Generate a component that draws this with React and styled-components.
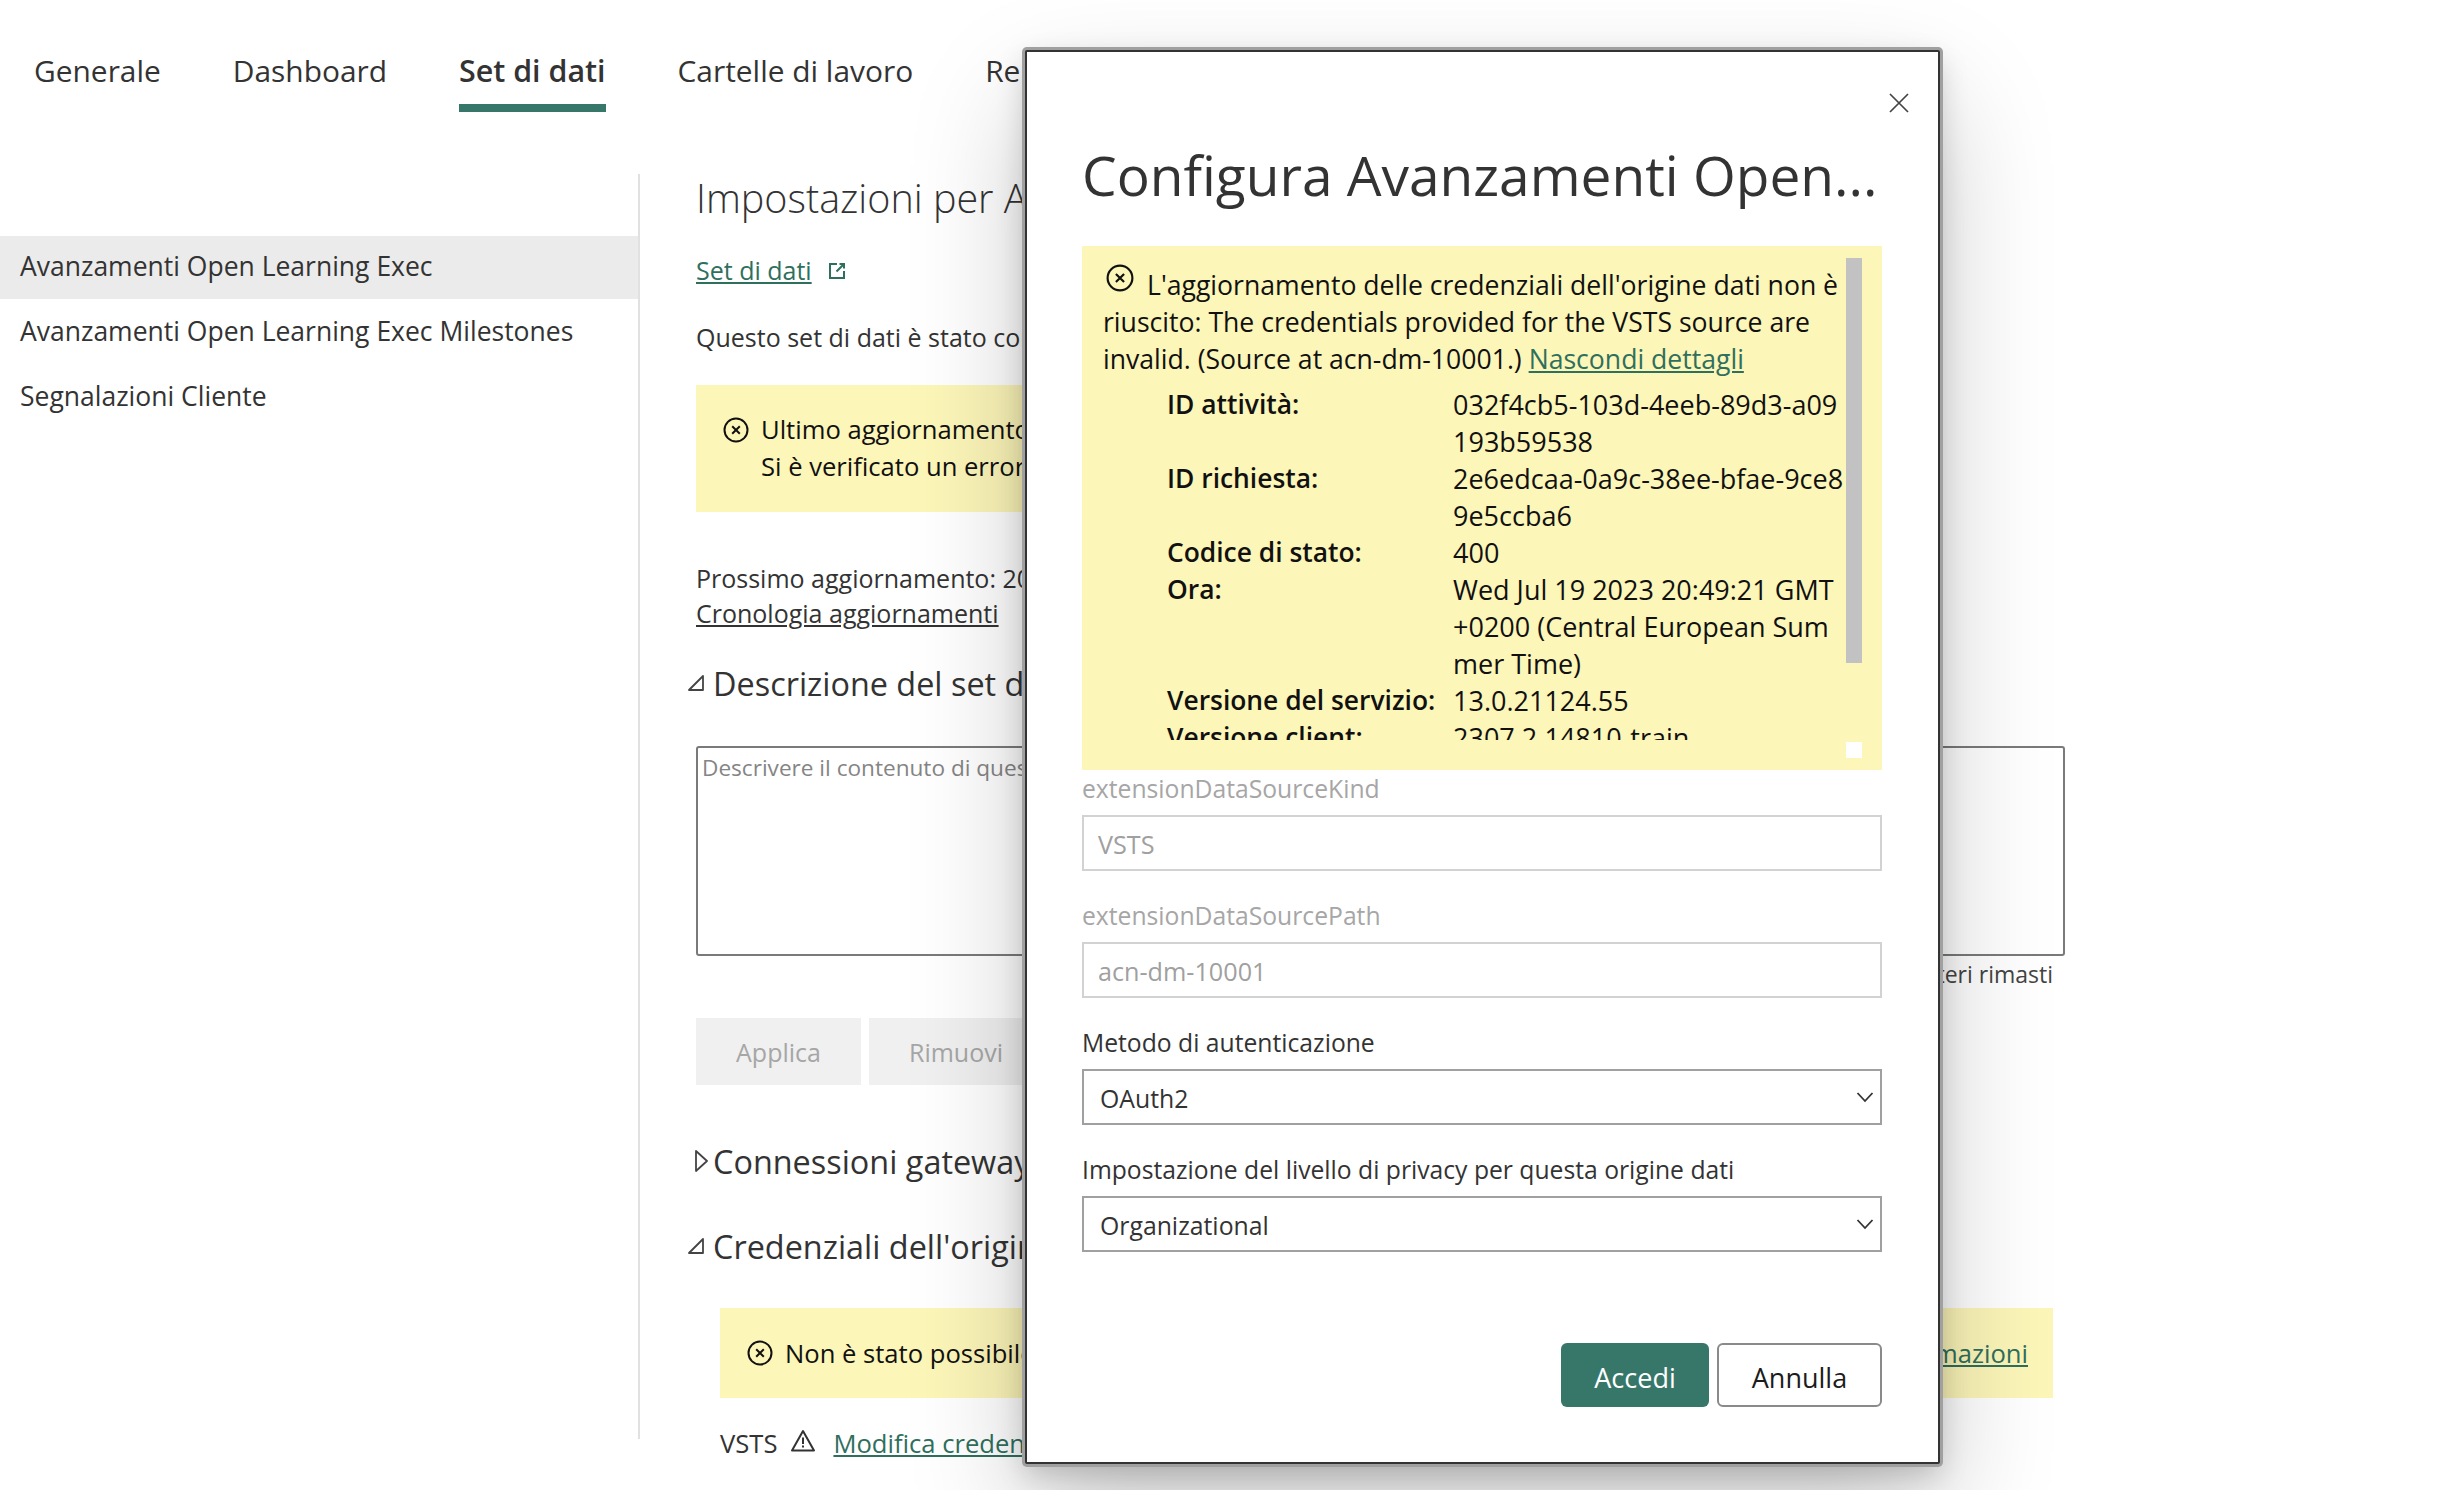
import { Fragment } from "react";
import styled, { createGlobalStyle } from "styled-components";

const GlobalStyle = createGlobalStyle`
  html, body {
    margin: 0;
    padding: 0;
    background: #fff;
  }
  body {
    font-family: "Open Sans", "Noto Sans", "Liberation Sans", sans-serif;
    font-size: 26px;
    color: #333;
  }
`;

const Page = styled.div`
  position: relative;
  width: 2452px;
  height: 1490px;
  overflow: hidden;
  background: #fff;
`;

const Tabs = styled.nav`
  display: flex;
  gap: 72px;
  padding-left: 34px;
`;

const Tab = styled.div`
  height: 112px;
  box-sizing: border-box;
  padding-top: 48px;
  line-height: 46px;
  font-size: ${(p) => (p.$active ? 30.4 : 29.9)}px;
  white-space: nowrap;
  font-weight: ${(p) => (p.$active ? 600 : 400)};
  border-bottom: 8px solid ${(p) => (p.$active ? "#37776a" : "transparent")};
`;

const Body = styled.div`
  display: flex;
  margin-top: 62px;
`;

const Sidebar = styled.aside`
  width: 640px;
  height: 1265px;
  box-sizing: border-box;
  padding-top: 62px;
  border-right: 2px solid #e1e1e1;
  display: flex;
  flex-direction: column;
  gap: 2px;
`;

const SideItem = styled.div`
  height: 63px;
  line-height: 61px;
  padding-left: 20px;
  font-size: 26.5px;
  white-space: nowrap;
  background: ${(p) => (p.$active ? "#ebebeb" : "transparent")};
`;

const Main = styled.main`
  width: 1369px;
  margin-left: 56px;
  display: flex;
  flex-direction: column;
`;

const PageTitle = styled.h1`
  margin: 0;
  font-size: 39.5px;
  line-height: 48px;
  padding-bottom: 2px;
  font-weight: 300;
  white-space: nowrap;
`;

const TextLine = styled.div`
  margin-top: ${(p) => p.$top || 0}px;
  line-height: ${(p) => p.$height || 37}px;
  font-size: 25px;
  white-space: nowrap;
  display: flex;
  align-items: center;
  gap: 16px;
`;

const GreenLink = styled.a`
  color: #2f6f5e;
  text-decoration: underline;
  white-space: nowrap;
`;

const DarkLink = styled.a`
  color: #333;
  text-decoration: underline;
`;

const Notice = styled.div`
  margin-top: 29px;
  width: 880px;
  height: 127px;
  box-sizing: border-box;
  padding: 26px 0 0 27px;
  background: #fdf6b9;
  color: #111;
  font-size: 25.6px;
  line-height: 37px;
  display: flex;
  gap: 12px;
  white-space: nowrap;
`;

const NoticeIcon = styled.span`
  display: flex;
  height: 37px;
  align-items: center;
`;

const SectionHead = styled.h2`
  margin: ${(p) => p.$top}px 0 0 ${(p) => p.$indent}px;
  font-size: 32.4px;
  line-height: 44px;
  font-weight: 400;
  white-space: nowrap;
  display: flex;
  align-items: center;
  gap: ${(p) => p.$gap}px;
`;

const DescriptionBox = styled.div`
  margin-top: 41px;
  height: 210px;
  box-sizing: border-box;
  border: 2px solid #7a7a7a;
  border-radius: 3px;
  padding: 5px 4px;
  font-size: 22.6px;
  line-height: 30px;
  color: #858585;
  white-space: nowrap;
`;

const Counter = styled.div`
  margin: 3px 12px 0 0;
  text-align: right;
  font-size: 23px;
  line-height: 30px;
  color: #444;
`;

const ButtonRow = styled.div`
  margin-top: 29px;
  display: flex;
  gap: 8px;
`;

const DisabledButton = styled.div`
  width: ${(p) => p.$width}px;
  height: 67px;
  line-height: 69px;
  font-size: 25px;
  text-align: center;
  background: #f0f0f0;
  color: #a6a6a6;
`;

const CredentialsNotice = styled.div`
  margin: 40px 12px 0 24px;
  height: 90px;
  box-sizing: border-box;
  padding: 0 25px 0 27px;
  background: #fdf6b9;
  color: #111;
  font-size: 25.6px;
  display: flex;
  align-items: center;
  justify-content: space-between;
  white-space: nowrap;
`;

const NoticeText = styled.span`
  display: flex;
  align-items: center;
  gap: 12px;
`;

const SourceRow = styled.div`
  margin: 31px 0 0 24px;
  height: 30px;
  line-height: 30px;
  font-size: 25.6px;
  display: flex;
  align-items: center;
  white-space: nowrap;
`;

const SourceName = styled.span`
  margin-right: 14px;
`;

const WarnIcon = styled.svg`
  margin: -8px 18px 0 0;
`;

const Dialog = styled.div`
  position: absolute;
  top: 50px;
  left: 1025px;
  width: 915px;
  height: 1414px;
  box-sizing: border-box;
  padding: 85px 56px 0 55px;
  background: #fff;
  border: 2px solid #333;
  border-radius: 2px;
  box-shadow: 0 0 0 3px #a0a0a0, 0 51px 115px rgba(0, 0, 0, 0.22),
    0 10px 29px rgba(0, 0, 0, 0.18);
`;

const CloseButton = styled.button`
  position: absolute;
  top: 39px;
  right: 27px;
  width: 24px;
  height: 24px;
  padding: 0;
  border: 0;
  background: none;
  display: flex;
`;

const DialogTitle = styled.h1`
  margin: 0;
  font-size: 55px;
  line-height: 76px;
  font-weight: 400;
  white-space: nowrap;
`;

const ErrorPanel = styled.div`
  margin-top: 33px;
  height: 524px;
  box-sizing: border-box;
  padding: 12px 20px 0 21px;
  background: #fdf6b9;
  display: flex;
`;

const ErrorScroll = styled.div`
  width: 743px;
  height: 482px;
  padding-top: 6px;
  box-sizing: border-box;
  overflow: hidden;
  color: #111;
  font-size: 26.6px;
  line-height: 37px;
  white-space: nowrap;
`;

const ErrorIcon = styled.svg`
  margin: 0 13px 0 3px;
  vertical-align: 3px;
`;

const DetailGrid = styled.div`
  margin: 8px 0 0 64px;
  display: grid;
  grid-template-columns: 286px 1fr;
  font-size: 27px;
`;

const DetailLabel = styled.div`
  font-size: 26.4px;
  font-weight: 600;
`;

const ScrollTrack = styled.div`
  width: 16px;
  height: 500px;
  display: flex;
  flex-direction: column;
  justify-content: space-between;
`;

const ScrollThumb = styled.div`
  height: 405px;
  background: #c2c2c2;
`;

const ScrollEnd = styled.div`
  height: 16px;
  background: #fff;
`;

const Field = styled.div`
  height: 127px;
`;

const FieldLabel = styled.div`
  height: 37px;
  line-height: 37px;
  margin-bottom: 8px;
  font-size: 24.7px;
  white-space: nowrap;
  color: ${(p) => (p.$disabled ? "#a6a6a6" : "#333")};
`;

const TextBox = styled.div`
  height: 56px;
  box-sizing: border-box;
  border: 2px solid #d2d2d2;
  padding-left: 14px;
  font-size: 25.2px;
  line-height: 54px;
  color: #a0a0a0;
`;

const SelectBox = styled.div`
  height: 56px;
  box-sizing: border-box;
  border: 2px solid #a0a0a0;
  padding: 0 6px 0 16px;
  font-size: 24.8px;
  color: #333;
  display: flex;
  align-items: center;
  justify-content: space-between;
`;

const SelectValue = styled.span`
  margin-top: 2px;
`;

const DialogActions = styled.div`
  margin-top: 65px;
  display: flex;
  justify-content: flex-end;
  gap: 8px;
`;

const ActionButton = styled.button`
  width: ${(p) => p.$width}px;
  height: 64px;
  border-radius: 6px;
  font: inherit;
  font-size: 27px;
  padding: 4px 0 0;
  color: ${(p) => (p.$primary ? "#fff" : "#1c1c1c")};
  background: ${(p) => (p.$primary ? "#37776a" : "#fff")};
  border: ${(p) => (p.$primary ? "0" : "2px solid #8a8a8a")};
`;

const CircleX = ({ size = 26 }) => (
  <svg width={size} height={size} viewBox="0 0 26 26" fill="none" stroke="#111" strokeWidth="2">
    <circle cx="13" cy="13" r="11.5" />
    <path d="M9.2 9.2l7.6 7.6M16.8 9.2l-7.6 7.6" />
  </svg>
);

const Chevron = () => (
  <svg width="18" height="12" viewBox="0 0 18 12" fill="none" stroke="#333" strokeWidth="1.8">
    <path d="M1.5 2l7.5 8 7.5-8" />
  </svg>
);

const OpenTriangle = () => (
  <svg width="16" height="16" viewBox="0 0 16 16" fill="none" stroke="#444" strokeWidth="1.8" strokeLinejoin="round">
    <path d="M15 1V15H1Z" />
  </svg>
);

const ClosedTriangle = () => (
  <svg width="13" height="22" viewBox="0 0 13 22" fill="none" stroke="#444" strokeWidth="1.8" strokeLinejoin="round">
    <path d="M1 1L12 11L1 21Z" />
  </svg>
);

const details = [
  ["ID attività:", ["032f4cb5-103d-4eeb-89d3-a09", "193b59538"]],
  ["ID richiesta:", ["2e6edcaa-0a9c-38ee-bfae-9ce8", "9e5ccba6"]],
  ["Codice di stato:", ["400"]],
  ["Ora:", ["Wed Jul 19 2023 20:49:21 GMT", "+0200 (Central European Sum", "mer Time)"]],
  ["Versione del servizio:", ["13.0.21124.55"]],
  ["Versione client:", ["2307.2.14810-train"]],
];

const App = () => {
  return (
    <Page>
      <GlobalStyle />
      <Tabs>
        <Tab>Generale</Tab>
        <Tab>Dashboard</Tab>
        <Tab $active>Set di dati</Tab>
        <Tab>Cartelle di lavoro</Tab>
        <Tab>Report</Tab>
      </Tabs>

      <Body>
        <Sidebar>
          <SideItem $active>Avanzamenti Open Learning Exec</SideItem>
          <SideItem>Avanzamenti Open Learning Exec Milestones</SideItem>
          <SideItem>Segnalazioni Cliente</SideItem>
        </Sidebar>

        <Main>
          <PageTitle>Impostazioni per Avanzamenti Open Learning Exec</PageTitle>
          <TextLine $top={28}>
            <GreenLink>Set di dati</GreenLink>
            <svg width="18" height="18" viewBox="0 0 18 18" fill="none" stroke="#2f6f5e" strokeWidth="2">
              <path d="M9 2H2v14h14V9M11.5 2H16v4.5M15.5 2.5l-7 7" />
            </svg>
          </TextLine>
          <TextLine $top={30}>Questo set di dati è stato configurato da un utente</TextLine>
          <Notice>
            <NoticeIcon>
              <CircleX />
            </NoticeIcon>
            <div>
              Ultimo aggiornamento non riuscito
              <br />
              Si è verificato un errore durante l'aggiornamento
            </div>
          </Notice>
          <TextLine $top={49} $height={35}>
            Prossimo aggiornamento: 2023
          </TextLine>
          <TextLine $height={35}>
            <DarkLink>Cronologia aggiornamenti</DarkLink>
          </TextLine>
          <SectionHead $top={30} $indent={-8} $gap={9}>
            <OpenTriangle />
            Descrizione del set di dati
          </SectionHead>
          <DescriptionBox>Descrivere il contenuto di questo set di dati</DescriptionBox>
          <Counter>4000 caratteri rimasti</Counter>
          <ButtonRow>
            <DisabledButton $width={165}>Applica</DisabledButton>
            <DisabledButton $width={174}>Rimuovi</DisabledButton>
          </ButtonRow>
          <SectionHead $top={54} $indent={-1} $gap={5}>
            <ClosedTriangle />
            Connessioni gateway
          </SectionHead>
          <SectionHead $top={41} $indent={-8} $gap={9}>
            <OpenTriangle />
            Credenziali dell'origine dati
          </SectionHead>
          <CredentialsNotice>
            <NoticeText>
              <CircleX />
              Non è stato possibile connettersi all'origine dati
            </NoticeText>
            <GreenLink>Altre informazioni</GreenLink>
          </CredentialsNotice>
          <SourceRow>
            <SourceName>VSTS</SourceName>
            <WarnIcon width="24" height="23" viewBox="0 0 24 23" fill="none" stroke="#333" strokeWidth="2" strokeLinejoin="round">
              <path d="M12 2L23 21.5H1Z" />
              <path d="M12 8.5v6.5M12 16.5v2" />
            </WarnIcon>
            <GreenLink>Modifica credenziali</GreenLink>
          </SourceRow>
        </Main>
      </Body>

      <Dialog>
        <CloseButton>
          <svg width="24" height="24" viewBox="0 0 24 24" fill="none" stroke="#444" strokeWidth="1.7">
            <path d="M3 3l18 18M21 3L3 21" />
          </svg>
        </CloseButton>
        <DialogTitle>Configura Avanzamenti Open...</DialogTitle>

        <ErrorPanel>
          <ErrorScroll>
            <ErrorIcon width="28" height="28" viewBox="0 0 26 26" fill="none" stroke="#111" strokeWidth="2">
              <circle cx="13" cy="13" r="11.5" />
              <path d="M9.2 9.2l7.6 7.6M16.8 9.2l-7.6 7.6" />
            </ErrorIcon>
            L'aggiornamento delle credenziali dell'origine dati non è
            <br />
            riuscito: The credentials provided for the VSTS source are
            <br />
            invalid. (Source at acn-dm-10001.) <GreenLink>Nascondi dettagli</GreenLink>
            <DetailGrid>
              {details.map(([label, lines]) => (
                <Fragment key={label}>
                  <DetailLabel>{label}</DetailLabel>
                  <div>
                    {lines.map((line) => (
                      <div key={line}>{line}</div>
                    ))}
                  </div>
                </Fragment>
              ))}
            </DetailGrid>
          </ErrorScroll>
          <ScrollTrack>
            <ScrollThumb />
            <ScrollEnd />
          </ScrollTrack>
        </ErrorPanel>

        <Field>
          <FieldLabel $disabled>extensionDataSourceKind</FieldLabel>
          <TextBox>VSTS</TextBox>
        </Field>
        <Field>
          <FieldLabel $disabled>extensionDataSourcePath</FieldLabel>
          <TextBox>acn-dm-10001</TextBox>
        </Field>
        <Field>
          <FieldLabel>Metodo di autenticazione</FieldLabel>
          <SelectBox>
            <SelectValue>OAuth2</SelectValue>
            <Chevron />
          </SelectBox>
        </Field>
        <Field>
          <FieldLabel>Impostazione del livello di privacy per questa origine dati</FieldLabel>
          <SelectBox>
            <SelectValue>Organizational</SelectValue>
            <Chevron />
          </SelectBox>
        </Field>

        <DialogActions>
          <ActionButton $primary $width={148}>
            Accedi
          </ActionButton>
          <ActionButton $width={165}>Annulla</ActionButton>
        </DialogActions>
      </Dialog>
    </Page>
  );
};

export default App;
